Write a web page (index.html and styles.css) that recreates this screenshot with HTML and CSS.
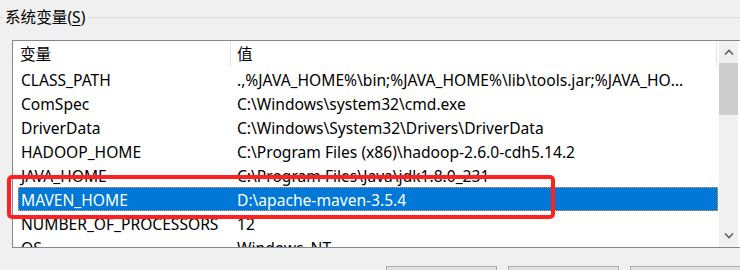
FILE: index.html
```html
<!DOCTYPE html>
<html lang="zh-CN">
<head>
    <meta charset="UTF-8">
    <title>系统变量</title>
    <link rel="stylesheet" href="styles.css">
</head>
<body>
    <div class="page">
        <div class="group-head">
            <span class="group-line short"></span>
            <span class="group-label">系统变量(<u>S</u>)</span>
            <span class="group-line"></span>
        </div>

        <div class="listbox">
            <div class="list-content">
                <div class="list-header">
                    <div class="hcell name">变量</div>
                    <div class="hcell value">值</div>
                </div>
                <div class="row">
                    <div class="cell name">CLASS_PATH</div>
                    <div class="cell value">.,%JAVA_HOME%\bin;%JAVA_HOME%\lib\tools.jar;%JAVA_HOME%\jre\lib\rt.jar</div>
                </div>
                <div class="row">
                    <div class="cell name">ComSpec</div>
                    <div class="cell value">C:\Windows\system32\cmd.exe</div>
                </div>
                <div class="row">
                    <div class="cell name">DriverData</div>
                    <div class="cell value">C:\Windows\System32\Drivers\DriverData</div>
                </div>
                <div class="row">
                    <div class="cell name">HADOOP_HOME</div>
                    <div class="cell value">C:\Program Files (x86)\hadoop-2.6.0-cdh5.14.2</div>
                </div>
                <div class="row">
                    <div class="cell name">JAVA_HOME</div>
                    <div class="cell value">C:\Program Files\Java\jdk1.8.0_231</div>
                </div>
                <div class="row selected">
                    <div class="cell name">MAVEN_HOME</div>
                    <div class="cell value">D:\apache-maven-3.5.4</div>
                </div>
                <div class="row">
                    <div class="cell name">NUMBER_OF_PROCESSORS</div>
                    <div class="cell value">12</div>
                </div>
                <div class="row">
                    <div class="cell name">OS</div>
                    <div class="cell value">Windows_NT</div>
                </div>
            </div>
            <div class="scrollbar">
                <div class="sb-arrow">
                    <svg width="10" height="6" viewBox="0 0 10 6"><path d="M1 5.5 L5 1.5 L9 5.5" fill="none" stroke="#606060" stroke-width="1.6"/></svg>
                </div>
                <div class="sb-thumb"></div>
                <div class="sb-track"></div>
                <div class="sb-arrow">
                    <svg width="10" height="6" viewBox="0 0 10 6"><path d="M1 0.5 L5 4.5 L9 0.5" fill="none" stroke="#606060" stroke-width="1.6"/></svg>
                </div>
            </div>
        </div>

        <div class="buttons">
            <button class="btn">新建(W)...</button>
            <button class="btn">编辑(I)...</button>
            <button class="btn">删除(L)</button>
        </div>

        <div class="mark"></div>
    </div>
</body>
</html>
```

FILE: styles.css
```css
body {
    margin: 0;
    background-color: #f0f0f0;
    font-family: "Noto Sans", "Noto Sans CJK SC", sans-serif;
    font-size: 15.6px;
    color: #000;
    overflow: hidden;
}
.page {
    position: relative;
    width: 740px;
    height: 270px;
    overflow: hidden;
}
.group-head {
    display: flex;
    align-items: center;
    height: 20px;
    margin-top: 7px;
}
.group-label {
    padding: 0 3px 0 2px;
    line-height: 20px;
}
.group-label u {
    text-underline-offset: 2px;
}
.group-line {
    flex: 1;
    height: 1px;
    background-color: #dcdcdc;
}
.group-line.short {
    flex: none;
    width: 3px;
}
.listbox {
    display: flex;
    margin: 13px 0 0 12px;
    width: 729px;
    height: 206px;
    border: 1px solid #828790;
    background-color: #fff;
}
.list-content {
    width: 706px;
    overflow: hidden;
}
.list-header {
    display: flex;
    height: 26px;
    align-items: center;
}
.hcell {
    height: 26px;
    line-height: 26px;
    border-right: 1px solid #e5e5e5;
}
.hcell.name {
    width: 210px;
    padding-left: 7px;
}
.hcell.value {
    width: 479px;
    padding-left: 6px;
}
.row {
    display: flex;
    height: 24px;
    margin-left: 5px;
    width: 700px;
    box-sizing: border-box;
}
.cell {
    white-space: nowrap;
    overflow: hidden;
    line-height: 22px;
    padding-top: 2px;
}
.cell.name {
    width: 210px;
    flex: none;
    padding-left: 3px;
}
.cell.value {
    flex: 1;
    padding-left: 6px;
    padding-right: 22px;
    text-overflow: ellipsis;
}
.row.selected {
    background-color: #0078d7;
    color: #fff;
    outline: 1px dotted #f0a050;
    outline-offset: -1px;
}
.scrollbar {
    display: flex;
    flex-direction: column;
    width: 19px;
    background-color: #f0f0f0;
}
.sb-arrow {
    height: 22px;
    display: flex;
    align-items: center;
    justify-content: center;
}
.sb-thumb {
    height: 52px;
    background-color: #cdcdcd;
}
.sb-track {
    flex: 1;
}
.buttons {
    display: flex;
    gap: 11px;
    margin: 18px 0 0 386px;
}
.btn {
    flex: none;
    width: 111px;
    height: 30px;
    border: 1px solid #adadad;
    background-color: #e1e1e1;
    font-family: inherit;
    font-size: 15px;
    padding: 0;
}
.mark {
    position: absolute;
    left: 7px;
    top: 175px;
    width: 540px;
    height: 36px;
    border: 4px solid #ff2020;
    border-radius: 5px;
}
```
